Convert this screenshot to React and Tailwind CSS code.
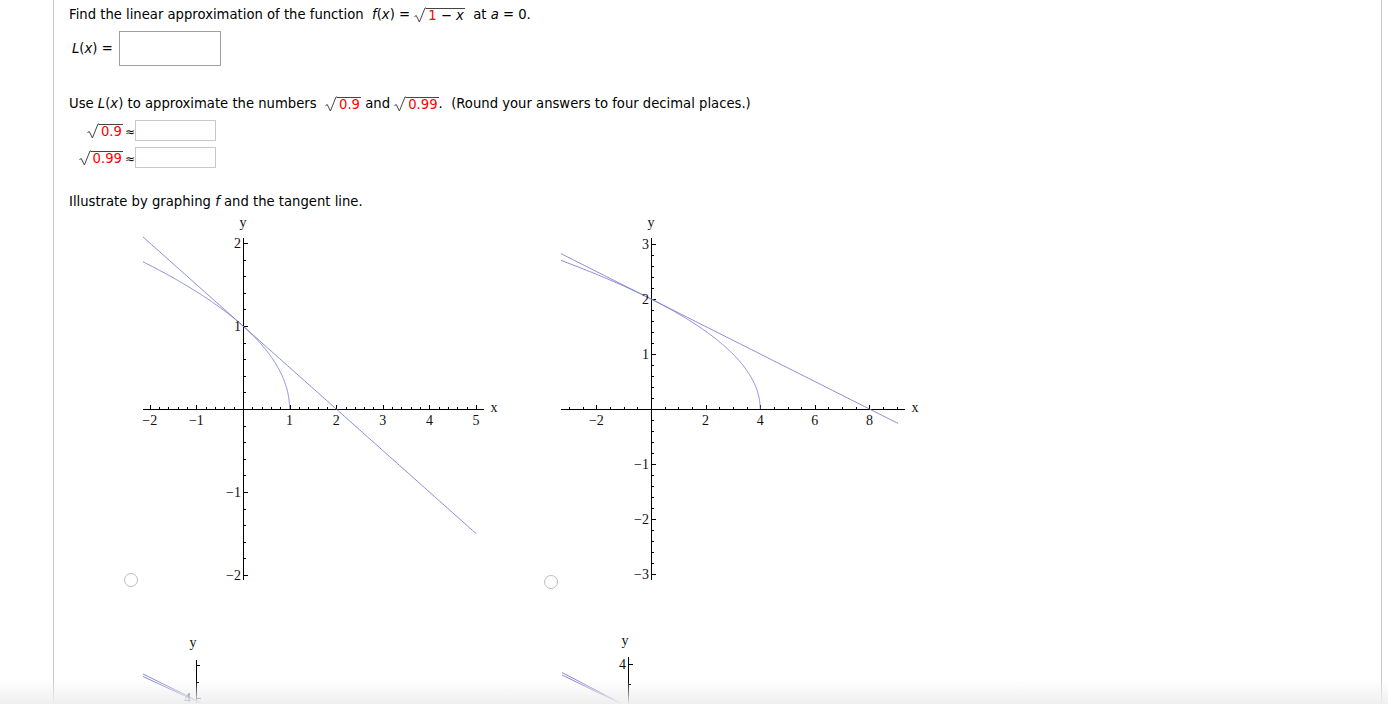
import React from 'react';

const CURVE = '#7c7cd0';

// radical sign + overline
const Sqrt = ({ children, className = '' }) => (
  <span className={`inline-flex items-stretch align-bottom ${className}`}>
    <svg width="12" height="16" viewBox="0 0 12 16" className="shrink-0">
      <path d="M0.5 9.5 L2.3 8.6 L5.4 15 L11 1 L12 1" fill="none" stroke="#444" strokeWidth="1" />
    </svg>
    <span className="border-t border-[#444] mt-px pl-[2px] pr-[1px] leading-[14px]">{children}</span>
  </span>
);

const Radio = ({ className = '' }) => (
  <span className={`block w-[14px] h-[14px] rounded-full border border-[#bdbdbd] bg-white shrink-0 ${className}`} />
);

// sample a function into a polyline string
const sample = (fn, from, to, n, toPx) => {
  const pts = [];
  for (let i = 0; i <= n; i++) {
    const x = from + ((to - from) * i) / n;
    pts.push(toPx(x, fn(x)));
  }
  return pts.join(' ');
};

const Plot = ({ vb, ox, oy, ux, uy, axX, axY, xStep, xMajor, yStep, yMajor, xLabels, yLabels, lines }) => {
  const px = (x) => ox + x * ux;
  const py = (y) => oy - y * uy;
  const toPx = (x, y) => `${px(x).toFixed(2)},${py(y).toFixed(2)}`;

  const xTicks = [];
  for (let i = Math.ceil((axX[0] - ox) / ux / xStep); i <= Math.floor((axX[1] - ox) / ux / xStep); i++) {
    if (i === 0) continue;
    const len = i % xMajor === 0 ? 4.5 : 2.5;
    const x = Math.round(px(i * xStep)) + 0.5;
    xTicks.push(<line key={'x' + i} x1={x} x2={x} y1={oy + 0.5} y2={oy + 0.5 - len} />);
  }
  const yTicks = [];
  for (let i = Math.ceil((oy - axY[1]) / uy / yStep); i <= Math.floor((oy - axY[0]) / uy / yStep); i++) {
    if (i === 0) continue;
    const len = i % yMajor === 0 ? 4.5 : 2.5;
    const y = Math.round(py(i * yStep)) + 0.5;
    yTicks.push(<line key={'y' + i} x1={ox + 0.5} x2={ox + 0.5 + len} y1={y} y2={y} />);
  }

  return (
    <svg width={vb[2]} height={vb[3]} viewBox={vb.join(' ')} className="block shrink-0">
      <g stroke="#000" strokeWidth="1" shapeRendering="crispEdges">
        <line x1={axX[0]} x2={axX[1]} y1={oy + 0.5} y2={oy + 0.5} />
        <line x1={ox + 0.5} x2={ox + 0.5} y1={axY[0]} y2={axY[1]} />
        {xTicks}
        {yTicks}
      </g>
      <g fill="none" stroke={CURVE} strokeWidth="0.9">
        {lines.map((l, i) => (
          <polyline key={i} points={l.param ? l.param(toPx) : sample(l.fn, l.from, l.to, 200, toPx)} />
        ))}
      </g>
      <g fontFamily="'Liberation Serif', serif" fontSize="14" fill="#111">
        {xLabels.map((v) => (
          <text key={'lx' + v} x={px(v)} y={oy + 16} textAnchor="middle">
            {v < 0 ? '\u2212' + -v : v}
          </text>
        ))}
        {yLabels.map((v) => (
          <text key={'ly' + v} x={ox - 2} y={py(v) + 4.5} textAnchor="end">
            {v < 0 ? '\u2212' + -v : v}
          </text>
        ))}
        <text x={ox} y={axY[0] - 11} textAnchor="middle">y</text>
        <text x={axX[1] + 10} y={oy + 3} textAnchor="middle">x</text>
      </g>
    </svg>
  );
};

// f(x) = sqrt(c - x) drawn by its parameter so the vertical end is smooth
const rootCurve = (c, xFrom) => (toPx) => {
  const pts = [];
  const tMax = Math.sqrt(c - xFrom);
  for (let i = 0; i <= 240; i++) {
    const t = (tMax * i) / 240;
    pts.push(toPx(c - t * t, t));
  }
  return pts.join(' ');
};

const Graph1 = () => (
  <Plot
    vb={[140, 212, 370, 375]}
    ox={243}
    oy={409}
    ux={46.6}
    uy={83}
    axX={[143, 484]}
    axY={[238, 580]}
    xStep={0.2}
    xMajor={5}
    yStep={0.2}
    yMajor={5}
    xLabels={[-2, -1, 1, 2, 3, 4, 5]}
    yLabels={[2, 1, -1, -2]}
    lines={[
      { param: rootCurve(1, -2.146) },
      { fn: (x) => 1 - x / 2, from: -2.146, to: 5 },
    ]}
  />
);

const Graph2 = () => (
  <Plot
    vb={[560, 212, 370, 375]}
    ox={651}
    oy={409}
    ux={27.3}
    uy={55}
    axX={[561, 905]}
    axY={[238, 580]}
    xStep={0.5}
    xMajor={4}
    yStep={0.2}
    yMajor={5}
    xLabels={[-2, 2, 4, 6, 8]}
    yLabels={[3, 2, 1, -1, -2, -3]}
    lines={[
      { param: rootCurve(4, -3.3) },
      { fn: (x) => 2 - x / 4, from: -3.3, to: 9.05 },
    ]}
  />
);

const Graph3 = () => (
  <svg width="370" height="375" viewBox="140 630 370 375" className="block shrink-0">
    <g stroke="#000" shapeRendering="crispEdges">
      <line x1="196.5" x2="196.5" y1="657" y2="1000" />
      <line x1="196.5" x2="200" y1="662.5" y2="662.5" />
      <line x1="196.5" x2="199" y1="679.5" y2="679.5" />
      <line x1="196.5" x2="201" y1="695.5" y2="695.5" />
    </g>
    <g fill="none" stroke={CURVE} strokeWidth="0.9">
      <line x1="143" y1="671" x2="212" y2="705" />
      <line x1="143" y1="673.5" x2="212" y2="705.5" />
    </g>
    <g fontFamily="'Liberation Serif', serif" fontSize="14" fill="#111">
      <text x="193" y="644" textAnchor="middle">y</text>
      <text x="191" y="699.5" textAnchor="end">4</text>
    </g>
  </svg>
);

const Graph4 = () => (
  <svg width="370" height="375" viewBox="560 630 370 375" className="block shrink-0">
    <g stroke="#000" shapeRendering="crispEdges">
      <line x1="628.5" x2="628.5" y1="654" y2="1000" />
      <line x1="628.5" x2="633" y1="661.5" y2="661.5" />
      <line x1="628.5" x2="631" y1="681.5" y2="681.5" />
      <line x1="628.5" x2="633" y1="702.5" y2="702.5" />
    </g>
    <g fill="none" stroke={CURVE} strokeWidth="0.9">
      <line x1="562" y1="669.5" x2="632" y2="706" />
      <line x1="562" y1="672" x2="632" y2="706" />
    </g>
    <g fontFamily="'Liberation Serif', serif" fontSize="14" fill="#111">
      <text x="625" y="642" textAnchor="middle">y</text>
      <text x="626" y="666" textAnchor="end">4</text>
    </g>
  </svg>
);

const App = () => {
  return (
    <div className="relative min-h-screen bg-white text-black font-['DejaVu_Sans',Verdana,sans-serif] text-[13.2px]">
      <div className="ml-[53px] w-[1329px] min-h-[1100px] border-x border-[#c8c8c8] pl-[15px] pt-[7px]">
        {/* question 1 */}
        <p className="h-4 leading-4 whitespace-nowrap">
          Find the linear approximation of the function&nbsp; <i>f</i>(<i>x</i>) ={' '}
          <Sqrt>
            <span className="text-[#f00]">1</span> &minus; <i>x</i>
          </Sqrt>
          &nbsp; at <i>a</i> = 0.
        </p>

        <div className="mt-[8px] flex items-center">
          <span className="pl-[3px] w-[50px]">
            <i>L</i>(<i>x</i>) =
          </span>
          <div className="w-[102px] h-[35px] border border-[#a0a0a0] bg-white" />
        </div>

        {/* question 2 */}
        <p className="mt-[30px] h-4 leading-4 whitespace-nowrap">
          Use <i>L</i>(<i>x</i>) to approximate the numbers&nbsp;{' '}
          <Sqrt>
            <span className="text-[#f00]">0.9</span>
          </Sqrt>{' '}
          and{' '}
          <Sqrt>
            <span className="text-[#f00]">0.99</span>
          </Sqrt>
          . &nbsp;(Round your answers to four decimal places.)
        </p>

        <div className="mt-[8px] flex flex-col gap-[6px]">
          {['0.9', '0.99'].map((v) => (
            <div key={v} className="flex items-center">
              <span className="w-[66px] flex justify-end items-center">
                <Sqrt>
                  <span className="text-[#f00]">{v}</span>
                </Sqrt>
                <span className="text-[12px] ml-[2px] mt-[3px]">&asymp;</span>
              </span>
              <div className="w-[81px] h-[21px] border border-[#c8c8c8] bg-white" />
            </div>
          ))}
        </div>

        {/* question 3 */}
        <p className="mt-[26px] h-4 leading-4 whitespace-nowrap">
          Illustrate by graphing <i>f</i> and the tangent line.
        </p>

        <div className="ml-[55px] mt-[2px] grid grid-cols-[420px_420px] gap-y-[46px]">
          <div className="flex items-end gap-[2px]">
            <Radio className="mb-0" />
            <Graph1 />
          </div>
          <div className="flex items-end gap-[2px]">
            <Radio className="mb-[-2px]" />
            <Graph2 />
          </div>
          <div className="flex items-end gap-[2px]">
            <Radio className="mb-0" />
            <Graph3 />
          </div>
          <div className="flex items-end gap-[2px]">
            <Radio className="mb-0" />
            <Graph4 />
          </div>
        </div>
      </div>

      <div className="pointer-events-none fixed inset-x-0 bottom-0 h-[24px] bg-linear-to-b from-white/0 to-[#efefef]" />
    </div>
  );
};

export default App;
